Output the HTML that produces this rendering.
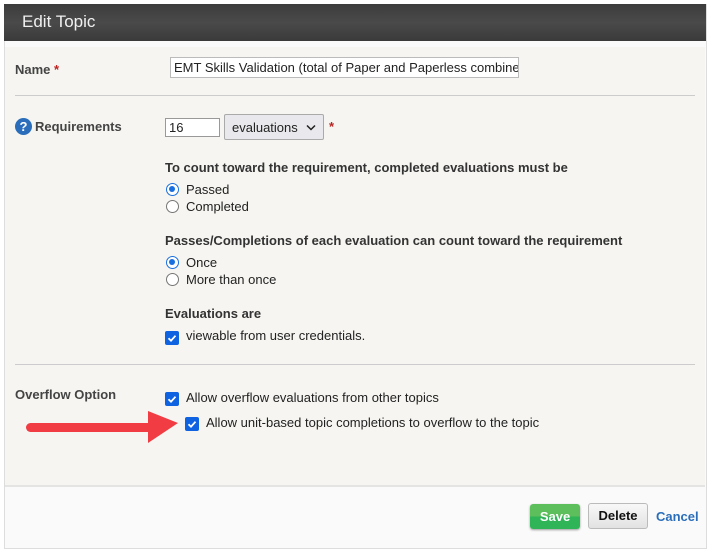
<!DOCTYPE html>
<html><head><style>
*{box-sizing:border-box;margin:0;padding:0}
body{width:710px;height:550px;background:#fff;font-family:"Liberation Sans",Tahoma,sans-serif;font-size:13px;color:#222;position:relative;overflow:hidden}
.a{position:absolute;white-space:nowrap}
.lbl{font-weight:bold;color:#444}
.b{font-weight:bold;color:#333}
.star{color:#b22;font-weight:bold}
.rad{position:absolute;width:13px;height:13px;border-radius:50%;border:1.5px solid #767676;background:#fff}
.rad.on{border:1.5px solid #1a6fe0}
.rad.on::after{content:"";position:absolute;left:2px;top:2px;width:6px;height:6px;border-radius:50%;background:#1a6fe0}
.cb{position:absolute;width:14px;height:14px;border-radius:2px;background:#0f62e0}
</style></head><body>
<div class="a" style="left:4px;top:4px;width:703px;height:545px;border:1px solid #ddd;background:#fafafa"></div>
<div class="a" style="left:4px;top:4px;width:702px;height:37px;background:linear-gradient(#3c3c3c,#4a4a4a 50%,#3a3a3a)"></div>
<div class="a" style="left:22px;top:12px;font-size:17px;color:#f0f0f0">Edit Topic</div>
<div class="a" style="left:5px;top:47px;width:700px;height:440px;background:#f6f5f1;border-bottom:2px solid #e4e4e2"></div>

<div class="a lbl" style="left:15px;top:62px">Name <span class="star">*</span></div>
<div class="a" style="left:170px;top:57px;width:349px;height:21px;border:1px solid #bbb;background:#fff;padding:2px 3px;overflow:hidden">EMT Skills Validation (total of Paper and Paperless combined</div>
<div class="a" style="left:15px;top:95px;width:680px;height:1px;background:#ccc"></div>

<div class="a" style="left:15px;top:118px;width:17px;height:17px;border-radius:50%;background:#2a6ebb;color:#fff;font-weight:bold;font-size:13px;text-align:center;line-height:17px">?</div>
<div class="a lbl" style="left:35px;top:119px">Requirements</div>
<div class="a" style="left:165px;top:118px;width:55px;height:19px;border:1px solid #999;background:#fff;padding:1px 3px">16</div>
<div class="a" style="left:224px;top:114px;width:100px;height:26px;border:1px solid #aaa;background:#e9e9ed;padding:5px 7px;border-radius:2px">evaluations <svg style="position:absolute;right:7px;top:9px" width="10" height="7"><path d="M1 1.5l4 4 4-4" stroke="#222" stroke-width="1.5" fill="none"/></svg></div>
<div class="a star" style="left:329px;top:119px">*</div>

<div class="a b" style="left:165px;top:160px">To count toward the requirement, completed evaluations must be</div>
<div class="rad on" style="left:166px;top:183px"></div><div class="a" style="left:186px;top:182px">Passed</div>
<div class="rad" style="left:166px;top:200px"></div><div class="a" style="left:186px;top:199px">Completed</div>

<div class="a b" style="left:165px;top:233px">Passes/Completions of each evaluation can count toward the requirement</div>
<div class="rad on" style="left:166px;top:256px"></div><div class="a" style="left:186px;top:255px">Once</div>
<div class="rad" style="left:166px;top:273px"></div><div class="a" style="left:186px;top:272px">More than once</div>

<div class="a b" style="left:165px;top:306px">Evaluations are</div>
<div class="cb" style="left:165px;top:331px"><svg width="14" height="14"><path d="M3.5 7.2l2.5 2.5 4.5-5" stroke="#fff" stroke-width="1.8" fill="none"/></svg></div>
<div class="a" style="left:186px;top:328px">viewable from user credentials.</div>
<div class="a" style="left:15px;top:364px;width:680px;height:1px;background:#ccc"></div>

<div class="a lbl" style="left:15px;top:387px">Overflow Option</div>
<div class="cb" style="left:165px;top:392px"><svg width="14" height="14"><path d="M3.5 7.2l2.5 2.5 4.5-5" stroke="#fff" stroke-width="1.8" fill="none"/></svg></div>
<div class="a" style="left:186px;top:390px">Allow overflow evaluations from other topics</div>
<div class="cb" style="left:185px;top:417px"><svg width="14" height="14"><path d="M3.5 7.2l2.5 2.5 4.5-5" stroke="#fff" stroke-width="1.8" fill="none"/></svg></div>
<div class="a" style="left:206px;top:415px">Allow unit-based topic completions to overflow to the topic</div>
<svg class="a" style="left:20px;top:405px" width="165" height="45"><g fill="#f03c42"><rect x="6" y="18" width="130" height="9" rx="4.5"/><polygon points="128,6 158,18 128,38"/></g></svg>

<div class="a" style="left:530px;top:504px;width:50px;height:25px;border-radius:3px;background:linear-gradient(#5cbf5c 50%,#2fb558 50%);color:#fff;font-weight:bold;text-align:center;line-height:25px;box-shadow:0 1px 2px #999">Save</div>
<div class="a" style="left:588px;top:503px;width:60px;height:26px;border-radius:3px;border:1px solid #bbb;background:linear-gradient(#f8f8f8,#e2e2e2);color:#111;font-weight:bold;text-align:center;line-height:24px">Delete</div>
<div class="a" style="left:656px;top:509px;color:#2a6ebb;font-weight:bold">Cancel</div>
</body></html>
